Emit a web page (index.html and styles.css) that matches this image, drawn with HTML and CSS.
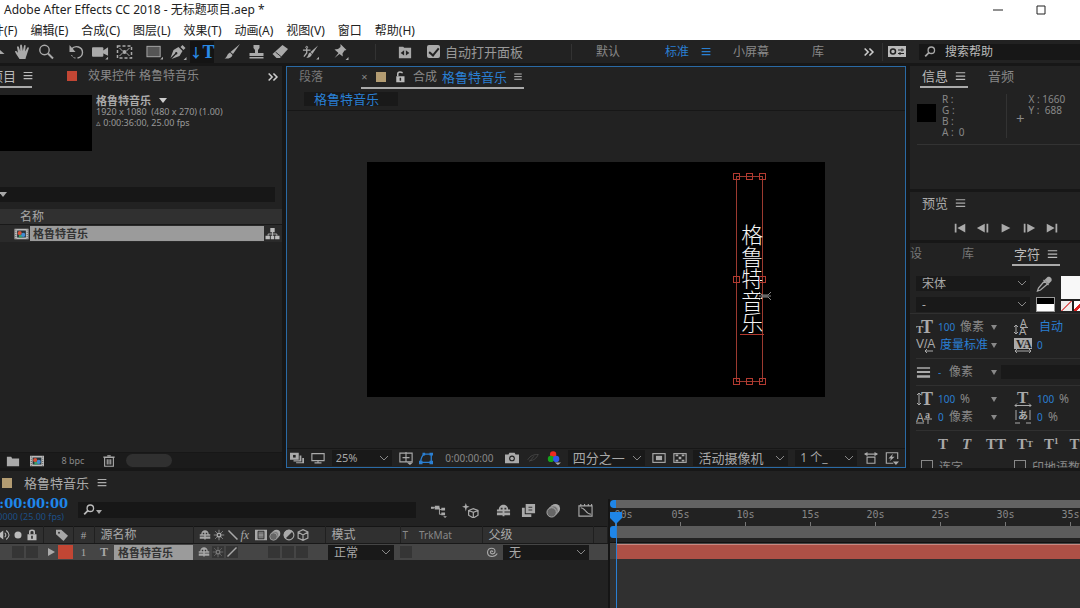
FILE: index.html
```html
<!DOCTYPE html>
<html lang="zh-CN">
<head>
<meta charset="utf-8">
<title>Adobe After Effects CC 2018 - 无标题项目.aep *</title>
<link rel="stylesheet" href="styles.css">
</head>
<body>
<svg class="sprite" aria-hidden="true">
  <symbol id="arrow" viewBox="0 0 16 16"><path d="M4 1l10 9H8l-4 4z"/></symbol>
  <symbol id="hand" viewBox="0 0 16 16"><path d="M5 15C3 12 1 9 .5 7.500c.6-1 1.700-.5 3 1.500L2.500 3c.4-1.200 1.600-.9 1.900.2L5.700 7 5.600 1.500c.3-1.200 1.600-1.200 1.900 0L8.300 7l1.200-5.300c.5-1.100 1.700-.7 1.600.4L10.700 7.500l2.100-3.800c.8-.9 1.900-.1 1.500.9L12.500 10c-.5 2-1.200 3-1.500 5z"/></symbol>
  <symbol id="zoom" viewBox="0 0 16 16"><g class="line"><circle cx="6" cy="6" r="4.700" stroke-width="1.400"/><path d="M9.500 9.500l5 5" stroke-width="2"/></g></symbol>
  <symbol id="search" viewBox="0 0 16 16"><g class="line"><circle cx="9.500" cy="6" r="3.700" stroke-width="1.500"/><path d="M7 8.500L2.500 13" stroke-width="2"/></g></symbol>
  <symbol id="rotate" viewBox="0 0 16 16"><path class="line" d="M3 5C7 .5 14 3 14 8.500 14 11 12 13.500 9 14" stroke-width="1.400"/><path class="line" d="M7 14C5 14 3.500 12.500 3 11" stroke-dasharray="2 1.500"/><path d="M1 1v7h6z"/></symbol>
  <symbol id="camera" viewBox="0 0 18 16"><rect y="3" width="12" height="10" rx="1"/><path d="M11 7l6-4v9l-6-3zM14 16h3v-3z"/></symbol>
  <symbol id="panbehind" viewBox="0 0 16 16"><g class="line"><rect x="1" y="2" width="14" height="12" stroke-width="1.500" stroke-dasharray="3 2"/><path d="M3 4l3 3M13 4l-3 3M3 12l3-3M13 12l-3-3"/></g><circle cx="8" cy="8" r="2"/></symbol>
  <symbol id="rect" viewBox="0 0 18 16"><rect x="1" y="2" width="14" height="11" fill="#555" stroke="#aaa"/><path d="M15 16h3v-3z"/></symbol>
  <symbol id="pen" viewBox="0 0 16 16"><path d="M0 14L3 6l5-3 4 4-3 5-8 3 4.500-4.500a1.200 1.200 0 1 0-1-1zM10 3l2-2 3 3-2 2zM13 16h3v-3z"/></symbol>
  <symbol id="brush" viewBox="0 0 16 16"><path d="M15.500 0L8.500 10 6 8zM5.500 8.500l2.500 2.500C7 14 4 15 0 14.500c3-1 2-4.500 5.500-6z"/></symbol>
  <symbol id="stamp" viewBox="0 0 16 16"><path d="M5 1h6v3L9.500 6v3H15v3H1V9h5.500V6L5 4zM1 13h14v1.500H1z"/></symbol>
  <symbol id="eraser" viewBox="0 0 16 16"><path d="M10 1l5.500 4-8 9H4L0 10z"/><path d="M3 8l6 5" stroke="#333"/></symbol>
  <symbol id="roto" viewBox="0 0 18 16"><path d="M17 1l-6 9-2-2zM8.500 8.500l2 2c-1 3-3 4-6 3.500 3-2 1.500-4.500 4-5.500zM15 16h3v-3z"/><g class="line"><circle cx="5" cy="3" r="1"/><path d="M5 4v5l-3 4M1 6h8" stroke-width="1.400"/></g></symbol>
  <symbol id="pin" viewBox="0 0 16 16"><path d="M8 0l6 6-2 .5-2 3 .3 3L7 10l-5 4 4-5-4-3.500 3.500-.5L8 3zM13 16h3v-3z"/></symbol>
  <symbol id="clapper" viewBox="0 0 16 16"><path d="M1 2h5l1 1h8v12H1z"/><path d="M7 6v6L3 9zm2 0v6l4-3z" fill="#222"/></symbol>
  <symbol id="menu" viewBox="0 0 16 16"><path d="M3 4h10M3 7.500h10M3 11h10" stroke="currentColor" stroke-width="1.300"/></symbol>
  <symbol id="more" viewBox="0 0 16 16"><path class="line" d="M3 4l4 4-4 4M8.500 4l4 4-4 4" stroke-width="1.800"/></symbol>
  <symbol id="sync" viewBox="0 0 18 11"><rect width="18" height="11"/><circle cx="5" cy="5.500" r="2.500" fill="none" stroke="#222" stroke-width="1.500"/><path d="M10 4h6M10 7.500h6M14 2.500v3M12 6v3" stroke="#222"/></symbol>
  <symbol id="lock" viewBox="0 0 16 16"><rect x="2" y="7" width="12" height="8"/><path class="line" d="M5 7V4c0-3 6-3 6 0v3" stroke-width="2"/><path d="M7 9h2v4H7z" fill="#222"/></symbol>
  <symbol id="unlock" viewBox="0 0 16 16"><rect x="3" y="7" width="11" height="8"/><path class="line" d="M5 7V4c0-4 6-3 6-1" stroke-width="2"/><path d="M7.500 9h2v4h-2z" fill="#222"/></symbol>
  <symbol id="compicon" viewBox="0 0 16 16"><rect x="0" y="2" width="16" height="12" fill="#bbb"/><path d="M1.500 3v11M14.500 3v11" stroke="#444" stroke-dasharray="1 1.500"/><rect x="3" y="4" width="10" height="8" fill="#26333b"/><circle cx="6" cy="7" r="2.300" fill="#d44e35"/><path d="M5 9h4v3H5z" fill="#3ba06a"/><circle cx="10" cy="9" r="2.300" fill="#408bd2"/></symbol>
  <symbol id="network" viewBox="0 0 16 16"><path d="M5.500 1h5v5h-5zM0 10h5v4H0zM6 10h4v4H6zM11 10h5v4h-5z"/><path class="line" d="M8 5v5M3 10V8h10v2"/></symbol>
  <symbol id="folder" viewBox="0 0 16 16"><path d="M1 3h5l1 2h8v9H1z"/></symbol>
  <symbol id="trash" viewBox="0 0 16 16"><g class="line" stroke-width="1.300"><path d="M3 4h10v10H3zM1.500 3.500h13M6 2h4M6 6v6M8 6v6M10 6v6"/></g></symbol>
  <symbol id="stack" viewBox="0 0 16 16"><rect x="0" y="2" width="10" height="8"/><path d="M11 5h2v7H4v-1.500h7zM14 8h2v6H7v-1.200h7z"/><rect x="3.500" y="4.500" width="3" height="3" fill="#222"/></symbol>
  <symbol id="monitor" viewBox="0 0 16 16"><path class="line" d="M1 3h14v8H1zM8 11v2M4 13.500h8" stroke-width="1.300"/></symbol>
  <symbol id="guides" viewBox="0 0 16 16"><path class="line" d="M1 2.500h14v10H1zM8 1v12M4 7.500h8" stroke-width="1.300"/><path d="M9 13h7l-3.500 3z"/></symbol>
  <symbol id="mask" viewBox="0 0 16 16"><path class="line" d="M2 13c0-5 1-7 4-9.500h8V13z" stroke-width="1.500"/><path d="M0 11h4v4H0zM4 2h3v3H4zM12 2h4v3h-4zM12 11h4v4h-4z"/></symbol>
  <symbol id="photo" viewBox="0 0 16 16"><path d="M0 4h4l1-2h6l1 2h4v10H0z"/><circle cx="8" cy="8.500" r="3.300" fill="#222"/><circle cx="8" cy="8.500" r="2"/></symbol>
  <symbol id="links" viewBox="0 0 16 16"><path class="line" d="M2 10c3-5 7-6 12-6-2 4-5 7-10 7M4 12l5-6"/></symbol>
  <symbol id="rgb" viewBox="0 0 16 16"><circle cx="7" cy="4" r="3.600" fill="#f02b1f"/><circle cx="4.500" cy="9" r="3.600" fill="#14a51b"/><circle cx="10.500" cy="9" r="3.600" fill="#315ae8"/><path d="M9 13h7l-3.500 3z"/></symbol>
  <symbol id="roi" viewBox="0 0 16 16"><rect class="line" x="1" y="3" width="14" height="10" stroke-width="1.300"/><rect x="4.500" y="5.500" width="7" height="5"/></symbol>
  <symbol id="checker" viewBox="0 0 16 16"><rect class="line" x="1" y="3" width="14" height="10" stroke-width="1.300"/><path d="M3 4h3v2H3zM10 4h3v2h-3zM6.500 6.500h3v3h-3zM3 10h3v2H3zM10 10h3v2h-3z"/></symbol>
  <symbol id="aspect" viewBox="0 0 16 16"><path class="line" d="M3.500 7h9v7h-9zM1 3.500h14" stroke-width="1.300"/><path d="M0 3.500L4 1v5zM16 3.500L12 1v5z"/></symbol>
  <symbol id="fast" viewBox="0 0 16 16"><path class="line" d="M14.500 9V2h-13v12h8" stroke-width="1.300"/><path d="M9 3L4 8.500h3L5 12l6-5.500H8zM9 12h7l-3.500 4z"/></symbol>
  <symbol id="first" viewBox="0 0 16 16"><path d="M2 3h2v10H2zM14 3v10L5 8z"/></symbol>
  <symbol id="prev" viewBox="0 0 16 16"><path d="M10 3v10L1 8zM12 3h2v10h-2z"/></symbol>
  <symbol id="play" viewBox="0 0 16 16"><path d="M3 3l10 5-10 5z"/></symbol>
  <symbol id="next" viewBox="0 0 16 16"><path d="M2 3h2v10H2zM6 3l9 5-9 5z"/></symbol>
  <symbol id="last" viewBox="0 0 16 16"><path d="M2 3l9 5-9 5zM12 3h2v10h-2z"/></symbol>
  <symbol id="dropper" viewBox="0 0 16 16"><path d="M11 1c2-1 5 1 4 4l-3 3-4-4z"/><path class="line" d="M8 5l3 3-7 6-3 1 1-3zM7 4l5 5" stroke-width="1.300"/></symbol>
  <symbol id="lines" viewBox="0 0 16 16"><path d="M1 3h14v1.500H1zM1 7h14v2H1zM1 11.500h14V14H1z"/></symbol>
  <symbol id="flow" viewBox="0 0 18 16"><path class="line" d="M1 5h7M10 5v7h4M10 7h5"/><path d="M5 3h5v4H5zM12 5h4v3h-4zM12 10h4v3h-4zM14 14h4l-2 2zM1 4h3v2H1z"/></symbol>
  <symbol id="draft" viewBox="0 0 18 16"><path d="M4 0l1 3 3 1-3 1-1 4-1-4-3-1 3-1z"/><path class="line" d="M7 8l5-2 5 2v5l-5 3-5-3zM7 8l5 2 5-2M12 10v6" stroke-width="1.300"/></symbol>
  <symbol id="shy" viewBox="0 0 16 16"><path d="M3 7c0-7 10-7 10 0h2v2H1V7zM1 10h6v3H1zM9 10h6v3H9zM7 6h2v8H7z"/><path d="M5 5h2v2H5zM9 5h2v2H9z" fill="#333"/></symbol>
  <symbol id="frames" viewBox="0 0 16 16"><path d="M5 1h10v10H5zM1 5h3v7h7v3H1z"/><path d="M8 4h4v1H8zM8 7h4v1H8z" fill="#333"/></symbol>
  <symbol id="blur" viewBox="0 0 16 16"><circle cx="10" cy="6" r="5"/><circle cx="8" cy="8" r="5" fill="#777" stroke="currentColor"/><circle cx="6" cy="10" r="5" fill="#666" stroke="currentColor"/></symbol>
  <symbol id="graph" viewBox="0 0 16 16"><path class="line" d="M1 3h14v11H1zM3 5c5 0 5 7 11 7M3 1v3M7 1v2M11 1v2M14.500 1v2" stroke-width="1.200"/></symbol>
  <symbol id="sound" viewBox="0 0 16 16"><path d="M0 5h3l4-3v12l-4-3H0z"/><path class="line" d="M9 5c2 2 2 4 0 6M11 2c5 4 5 8 0 12" stroke-width="1.400"/></symbol>
  <symbol id="dot" viewBox="0 0 16 16"><circle cx="8" cy="8" r="4.700"/></symbol>
  <symbol id="tag" viewBox="0 0 16 16"><path d="M0 1h7l9 8-6 7-10-9z"/><circle cx="4" cy="5" r="1.300" fill="#333"/></symbol>
  <symbol id="sun" viewBox="0 0 16 16"><circle class="line" cx="8" cy="8" r="2.500" stroke-width="2"/><path class="line" d="M8 1v3M8 12v3M1 8h3M12 8h3M3 3l2 2M13 3l-2 2M3 13l2-2M13 13l-2-2"/></symbol>
  <symbol id="slash" viewBox="0 0 16 16"><path class="line" d="M2 14L14 2" stroke-width="2"/></symbol>
  <symbol id="backslash" viewBox="0 0 16 16"><path class="line" d="M2 2l12 12" stroke-width="2"/></symbol>
  <symbol id="film" viewBox="0 0 16 16"><path d="M0 1h16v14H0z"/><path d="M4 3h8v10H4z" fill="#777" stroke="#222"/><path d="M5 7.500h6v1H5z"/></symbol>
  <symbol id="adjust" viewBox="0 0 16 16"><circle class="line" cx="8" cy="8" r="6.500" stroke-width="1.500"/><path d="M13 3A7 7 0 0 0 3 13z"/></symbol>
  <symbol id="cube" viewBox="0 0 16 16"><path class="line" d="M1.500 4L8 1l6.500 3v8L8 15l-6.500-3zM1.500 4L8 8l6.500-4M8 8v7" stroke-width="1.600"/></symbol>
  <symbol id="spiral" viewBox="0 0 16 16"><path class="line" d="M9 8c0-2-3-2-3 0 0 4 6 3 6-1 0-5-9-6-10 1 0 7 9 8 13 2" stroke-width="1.500"/></symbol>
  <symbol id="size" viewBox="0 0 20 16"><text x="0" y="14" font-size="11">T</text><text x="5" y="14" font-size="18">T</text></symbol>
  <symbol id="kern" viewBox="0 0 20 16"><text x="0" y="11" font-size="12" class="thin">V/A</text><path class="line" d="M9 14h8M11 12l-2 2 2 2"/></symbol>
  <symbol id="leading" viewBox="0 0 20 16"><text x="7" y="8" font-size="10" class="thin">A</text><text x="6" y="16" font-size="11" class="thin">A</text><path class="line" d="M3 6v9M1 8l2-2 2 2M1 13l2 2 2-2M7 8.500h8"/></symbol>
  <symbol id="track" viewBox="0 0 20 16"><rect x="1" y="1" width="18" height="11"/><text x="3" y="11" font-size="12" fill="#222">VA</text><path class="line" d="M2 14h16M4 12l-2 2 2 2M16 12l2 2-2 2"/></symbol>
  <symbol id="vscale" viewBox="0 0 20 16"><text x="5" y="14" font-size="18">T</text><path class="line" d="M3 2v12M1 4l2-2 2 2M1 12l2 2 2-2"/></symbol>
  <symbol id="hscale" viewBox="0 0 20 16"><text x="4" y="12" font-size="17">T</text><path class="line" d="M2 14.500h16M4 12.500l-2 2 2 2M16 12.500l2 2-2 2"/></symbol>
  <symbol id="baseline" viewBox="0 0 20 16"><text x="0" y="13" font-size="12" class="thin">A</text><text x="9" y="9" font-size="10">a</text><path class="line" d="M0 14h8M8 10h8M12 10v5"/></symbol>
  <symbol id="tsume" viewBox="0 0 20 16"><text x="5" y="10" font-size="10">あ</text><path class="line" d="M3 1v10M17 1v10M2 14h5M18 14h-5"/></symbol>
</svg>

<header class="titlebar">
  <h1>Adobe After Effects CC 2018 - 无标题项目.aep *</h1>
  <div class="winbtns">
    <button aria-label="最小化"><svg viewBox="0 0 10 10"><path d="M0 5h10"/></svg></button>
    <button aria-label="最大化"><svg viewBox="0 0 10 10"><path d="M1 1h8v8H1z"/></svg></button>
    <button aria-label="关闭"><svg viewBox="0 0 10 10"><path d="M1 1l8 8M9 1L1 9"/></svg></button>
  </div>
</header>
<nav class="menubar">
  <button>文件(F)</button><button>编辑(E)</button><button>合成(C)</button><button>图层(L)</button><button>效果(T)</button><button>动画(A)</button><button>视图(V)</button><button>窗口</button><button>帮助(H)</button>
</nav>

<div class="toolbar">
  <div class="tools">
    <div class="group"><button aria-label="选取"><svg><use href="#arrow"/></svg></button><button aria-label="手形"><svg><use href="#hand"/></svg></button><button aria-label="缩放"><svg><use href="#zoom"/></svg></button></div>
    <div class="group"><button aria-label="旋转"><svg><use href="#rotate"/></svg></button><button aria-label="摄像机"><svg><use href="#camera"/></svg></button><button aria-label="锚点"><svg><use href="#panbehind"/></svg></button></div>
    <div class="group"><button aria-label="矩形"><svg><use href="#rect"/></svg></button><button aria-label="钢笔"><svg><use href="#pen"/></svg></button><button class="on" aria-label="直排文字">↓<b>T</b></button></div>
    <div class="group"><button aria-label="画笔"><svg><use href="#brush"/></svg></button><button aria-label="仿制图章"><svg><use href="#stamp"/></svg></button><button aria-label="橡皮擦"><svg><use href="#eraser"/></svg></button></div>
    <div class="group"><button aria-label="Roto 笔刷"><svg><use href="#roto"/></svg></button></div>
    <div class="group"><button aria-label="操控点"><svg><use href="#pin"/></svg></button></div>
  </div>
  <div class="autopanel">
    <svg class="ic"><use href="#clapper"/></svg>
    <label class="check"><input type="checkbox" checked>自动打开面板</label>
  </div>
  <div class="spaces">
    <button>默认</button>
    <button class="on">标准<svg class="ic"><use href="#menu"/></svg></button>
    <button class="small">小屏幕</button>
    <button class="library">库</button>
    <button class="bright" aria-label="更多"><svg class="ic"><use href="#more"/></svg></button>
  </div>
  <button class="syncbtn" aria-label="同步设置"><svg><use href="#sync"/></svg></button>
  <label class="helpsearch"><svg class="ic"><use href="#search"/></svg><input type="text" placeholder="搜索帮助" aria-label="搜索帮助"></label>
</div>

<main class="workspace">
  <section class="panel project">
    <div class="tabs">
      <button class="tab on cut">项目<svg class="ic"><use href="#menu"/></svg></button>
      <button class="tab fx"><i class="swatch red"></i>效果控件 格鲁特音乐</button>
      <button class="overflow" aria-label="更多"><svg class="ic"><use href="#more"/></svg></button>
    </div>
    <div class="preview">
      <div class="thumb"></div>
      <div class="meta">
        <strong>格鲁特音乐 <i class="tri"></i></strong>
        <span>1920 x 1080&nbsp; (480 x 270) (1.00)</span>
        <span>▵ 0:00:36:00, 25.00 fps</span>
      </div>
    </div>
    <label class="filter"><i class="tri"></i><input type="text" aria-label="搜索项目"></label>
    <div class="colhead">名称</div>
    <div class="item"><svg class="ic"><use href="#compicon"/></svg><span>格鲁特音乐</span><svg class="ic"><use href="#network"/></svg></div>
    <div class="fill"></div>
    <div class="pfoot">
      <button aria-label="新建文件夹"><svg class="ic"><use href="#folder"/></svg></button>
      <button aria-label="新建合成"><svg class="ic"><use href="#compicon"/></svg></button>
      <button class="bpc">8 bpc</button>
      <button aria-label="删除"><svg class="ic"><use href="#trash"/></svg></button>
      <div class="hscroll"></div>
    </div>
  </section>

  <section class="viewer">
    <div class="tabs">
      <button class="tab para">段落</button>
      <button class="tab on comp"><span class="x">×</span><i class="swatch tan"></i><svg class="ic"><use href="#unlock"/></svg><span class="dim">合成</span><span class="blue">格鲁特音乐</span><svg class="ic"><use href="#menu"/></svg></button>
    </div>
    <div class="crumbs"><button>格鲁特音乐</button></div>
    <div class="stage">
      <div class="canvas">
        <div class="textbox">
          <i class="h tl"></i><i class="h tc"></i><i class="h tr"></i><i class="h ml"></i><i class="h mr"></i><i class="h bl"></i><i class="h bc"></i><i class="h br"></i>
          <span>格鲁特音乐</span>
          <svg class="cursor" viewBox="0 0 14 10"><path d="M1 1l3 3h6l3-3M1 9l3-3h6l3 3M1 5h12"/></svg>
        </div>
      </div>
    </div>
    <div class="vfoot">
      <button aria-label="始终预览"><svg class="ic"><use href="#stack"/></svg></button>
      <button aria-label="主查看器"><svg class="ic"><use href="#monitor"/></svg></button>
      <select class="zoomsel" aria-label="放大率"><option>25%</option></select>
      <button aria-label="参考线"><svg class="ic"><use href="#guides"/></svg></button>
      <button class="on" aria-label="蒙版"><svg class="ic"><use href="#mask"/></svg></button>
      <button class="vtime">0:00:00:00</button>
      <button aria-label="快照"><svg class="ic"><use href="#photo"/></svg></button>
      <button class="off" aria-label="显示快照"><svg class="ic"><use href="#links"/></svg></button>
      <button aria-label="通道"><svg class="ic"><use href="#rgb"/></svg></button>
      <select class="ressel" aria-label="分辨率"><option>四分之一</option></select>
      <button aria-label="目标区域"><svg class="ic"><use href="#roi"/></svg></button>
      <button aria-label="透明网格"><svg class="ic"><use href="#checker"/></svg></button>
      <select class="camsel" aria-label="3D 视图"><option>活动摄像机</option></select>
      <select class="viewsel" aria-label="视图布局"><option>1 个_</option></select>
      <button aria-label="像素长宽比"><svg class="ic"><use href="#aspect"/></svg></button>
      <button aria-label="快速预览"><svg class="ic"><use href="#fast"/></svg></button>
    </div>
  </section>

  <aside class="side">
    <section class="panel info">
      <div class="tabs">
        <button class="tab on">信息<svg class="ic"><use href="#menu"/></svg></button>
        <button class="tab audio">音频</button>
      </div>
      <div class="readout">
        <div class="colour"></div>
        <div class="rgba"><span>R :</span><span>G :</span><span>B :</span><span>A :&nbsp; 0</span></div>
        <div class="plus">+</div>
        <div class="xy"><span>X : 1660</span><span>Y :&nbsp; 688</span></div>
      </div>
    </section>
    <section class="panel play">
      <div class="tabs"><button class="tab">预览<svg class="ic"><use href="#menu"/></svg></button></div>
      <div class="transport">
        <button aria-label="第一帧"><svg class="ic"><use href="#first"/></svg></button>
        <button aria-label="上一帧"><svg class="ic"><use href="#prev"/></svg></button>
        <button aria-label="播放"><svg class="ic"><use href="#play"/></svg></button>
        <button aria-label="下一帧"><svg class="ic"><use href="#next"/></svg></button>
        <button aria-label="最后一帧"><svg class="ic"><use href="#last"/></svg></button>
      </div>
    </section>
    <section class="panel chars">
      <div class="tabs">
        <button class="tab preset">设</button><button class="tab lib">库</button>
        <button class="tab on">字符<svg class="ic"><use href="#menu"/></svg></button>
      </div>
      <div class="fontrow">
        <div class="fonts">
          <select aria-label="字体"><option>宋体</option></select>
          <select aria-label="字体样式"><option>-</option></select>
        </div>
        <div class="pick"><svg class="ic"><use href="#dropper"/></svg><i class="bw"></i></div>
        <div class="paint"><i class="white"></i><div><i class="none"></i><i class="none strong"></i></div></div>
      </div>
      <div class="props">
        <svg><use href="#size"/></svg><label><input value="100" aria-label="字体大小">像素</label><i class="tri"></i><svg><use href="#leading"/></svg><label class="cjk">自动</label>
        <svg><use href="#kern"/></svg><label class="cjk">度量标准</label><i class="tri"></i><svg><use href="#track"/></svg><label><input value="0" aria-label="字符间距"></label>
      </div>
      <div class="props stroke">
        <svg><use href="#lines"/></svg><label><input class="one" value="-" aria-label="描边宽度">像素</label><i class="tri"></i><span class="slot"></span>
      </div>
      <div class="props">
        <svg><use href="#vscale"/></svg><label><input value="100" aria-label="垂直缩放">%</label><i class="tri"></i><svg><use href="#hscale"/></svg><label><input value="100" aria-label="水平缩放">%</label>
        <svg><use href="#baseline"/></svg><label><input class="one" value="0" aria-label="基线偏移">像素</label><i class="tri"></i><svg><use href="#tsume"/></svg><label><input class="one" value="0" aria-label="比例间距">%</label>
      </div>
      <div class="styles">
        <button class="faux">T</button><button><em>T</em></button><button>TT</button><button>T<small>T</small></button><button>T<sup>1</sup></button><button>T<sub>1</sub></button>
      </div>
      <div class="opts"><label><input type="checkbox">连字</label><label><input type="checkbox">印地语数字</label></div>
    </section>
  </aside>
</main>

<section class="timeline">
  <div class="tabs"><button class="tab"><i class="swatch tan"></i>格鲁特音乐<svg class="ic"><use href="#menu"/></svg></button></div>
  <div class="tbody">
    <div class="layers">
      <div class="tctl">
        <div class="clock"><b>0:00:00:00</b><span>00000 (25.00 fps)</span></div>
        <label class="tsearch"><svg class="ic"><use href="#search"/></svg><i class="tri"></i><input type="text" aria-label="搜索图层"></label>
        <div class="tbtns">
          <button aria-label="合成微型流程图"><svg><use href="#flow"/></svg></button>
          <button aria-label="草图 3D"><svg><use href="#draft"/></svg></button>
          <button aria-label="隐藏图层"><svg><use href="#shy"/></svg></button>
          <button aria-label="帧混合"><svg><use href="#frames"/></svg></button>
          <button aria-label="运动模糊"><svg><use href="#blur"/></svg></button>
          <button aria-label="图表编辑器"><svg><use href="#graph"/></svg></button>
        </div>
      </div>
      <table>
        <colgroup><col class="c1"><col class="c2"><col class="c3"><col class="c4"><col class="c5"><col class="c6"><col class="c7"><col class="c8"><col></colgroup>
        <thead><tr>
          <th><div class="cells av"><svg><use href="#sound"/></svg><svg><use href="#dot"/></svg><svg><use href="#lock"/></svg></div></th>
          <th><div class="cells lab"><svg><use href="#tag"/></svg></div></th>
          <th class="mid">#</th>
          <th class="srcname">源名称</th>
          <th><div class="cells sw"><svg><use href="#shy"/></svg><svg><use href="#sun"/></svg><svg><use href="#backslash"/></svg><em>fx</em><svg><use href="#film"/></svg><svg><use href="#blur"/></svg><svg><use href="#adjust"/></svg><svg><use href="#cube"/></svg></div></th>
          <th class="mode">模式</th>
          <th class="trk"><span>T</span><span>TrkMat</span></th>
          <th class="parent">父级</th>
          <th></th>
        </tr></thead>
        <tbody><tr>
          <td><div class="cells av"><i></i><i class="box"></i><i class="box"></i></div></td>
          <td><div class="cells lab"><i class="twirl"></i><i class="redbox"></i></div></td>
          <td class="mid">1</td>
          <td><div class="lname"><b>T</b><span>格鲁特音乐</span></div></td>
          <td><div class="cells sw"><svg><use href="#shy"/></svg><svg class="faint box"><use href="#sun"/></svg><svg class="box"><use href="#slash"/></svg><i></i><i></i><i class="box"></i><i class="box"></i><i class="box"></i></div></td>
          <td><select class="modesel" aria-label="模式"><option>正常</option></select></td>
          <td><i class="box"></i></td>
          <td><div class="par"><svg><use href="#spiral"/></svg><select aria-label="父级"><option>无</option></select></div></td>
          <td></td>
        </tr></tbody>
      </table>
    </div>
    <div class="track">
      <div class="nav"></div>
      <div class="ruler"><span>00s</span><span>05s</span><span>10s</span><span>15s</span><span>20s</span><span>25s</span><span>30s</span><span>35s</span></div>
      <div class="work"></div>
      <div class="lane"><div class="clip"></div></div>
      <div class="rest"></div>
      <svg class="playhead" viewBox="0 0 12 12"><path d="M0 0h12v6l-6 6-6-6z"/></svg>
      <i class="needle"></i>
    </div>
  </div>
</section>
</body>
</html>
```
FILE: styles.css
```css
* { box-sizing: border-box; }
body {
  margin: 0;
  min-height: 100vh;
  display: flex;
  flex-direction: column;
  overflow: hidden;
  background: #171717;
  color: #a8a8a8;
  font: 13px/16px "Noto Sans", "Noto Sans CJK SC", sans-serif;
}
button, input, select {
  margin: 0; padding: 0; border: 0; border-radius: 0;
  background: none; color: inherit; font: inherit; outline: 0; appearance: none;
}
button { display: flex; align-items: center; white-space: nowrap; flex: none; }
input { min-width: 0; }
svg { fill: currentColor; flex: none; }
.sprite { display: none; }
.sprite text { font-family: "Liberation Serif", "Noto Sans CJK SC", serif; font-weight: bold; }
.sprite .thin { font-family: "Liberation Sans", sans-serif; font-weight: normal; }
.line { fill: none; stroke: currentColor; }
.ic { width: 14px; height: 14px; }
.blue { color: #2a7fd2; }
.tri { width: 0; height: 0; border: 4px solid transparent; border-top: 5px solid #a8a8a8; border-bottom: 0; flex: none; }
.swatch { width: 10px; height: 10px; flex: none; }
.red { background: #c24634; }
.tan { background: #b39c72; }
select {
  background: #191919 url("data:image/svg+xml,%3Csvg xmlns='http://www.w3.org/2000/svg' width='8' height='5'%3E%3Cpath d='M0 0l4 4 4-4' fill='none' stroke='%23888'/%3E%3C/svg%3E") no-repeat right 4px center;
}

.titlebar, .menubar { background: #fff; color: #222; display: flex; font-size: 12px; }
.titlebar { height: 20px; align-items: center; overflow: hidden; flex: none; }
.titlebar h1 { margin: 0 auto 0 4px; font-size: 12px; font-weight: 400; }
.winbtns { display: flex; margin-right: -25px; }
.winbtns button { width: 43px; height: 20px; justify-content: center; }
.winbtns svg { width: 10px; height: 10px; fill: none; stroke: #222; }
.menubar { height: 20px; padding-top: 2px; gap: 13px; margin-left: -20px; overflow: hidden; flex: none; align-items: center; }

.toolbar { height: 23px; background: #222; display: flex; align-items: center; flex: none; overflow: hidden; margin-bottom: 3px; }
.tools { display: flex; margin-left: -14px; gap: 6px; flex: none; }
.group { display: flex; }
.tools button { width: 24px; height: 22px; justify-content: center; color: #aaa; }
.tools svg { width: 17px; height: 16px; }
.tools .on { background: #141414; color: #2a8ae6; font-size: 13px; font-weight: 700; }
.tools .on b { font: bold 18px/18px "Liberation Serif", serif; }
.autopanel { display: flex; align-items: center; gap: 15px; width: 196px; margin-left: 23px; padding-left: 22px; border-left: 1px solid #333; flex: none; }
.check { display: flex; align-items: center; gap: 5px; white-space: nowrap; color: #999; }
.check input { width: 13px; height: 13px; background: #aaa; border-radius: 2px; position: relative; flex: none; }
.check input::after { content: ""; position: absolute; left: 4px; top: 1px; width: 4px; height: 8px; border: solid #222; border-width: 0 2px 2px 0; transform: rotate(40deg); }
.spaces { flex: 1; display: flex; align-items: center; padding: 0 6px 0 24px; border-left: 1px solid #333; color: #888; font-size: 12px; }
.spaces .on { color: #2a7fd2; gap: 10px; margin-left: 45px; }
.spaces .small { margin-left: 20px; }
.spaces .library { margin-left: 43px; }
.spaces .bright { color: #ccc; margin-left: auto; }
.syncbtn { border-left: 1px solid #333; padding: 0 13px 0 5px; color: #bbb; height: 18px; }
.syncbtn svg { width: 18px; height: 11px; }
.helpsearch { width: 161px; height: 16px; background: #171717; display: flex; align-items: center; gap: 8px; padding-left: 4px; flex: none; }
.helpsearch input { width: 110px; font-size: 12px; }
.helpsearch input::placeholder { color: #bbb; opacity: 1; }

.workspace { display: flex; gap: 4px; height: 402px; flex: none; }
.panel { background: #222; }
.tabs { display: flex; height: 22px; align-items: center; flex: none; }
.tab { height: 22px; border-bottom: 2px solid transparent; color: #888; }
.tab.on { border-color: #aaa; color: #bbb; }

.project { width: 282px; display: flex; flex-direction: column; overflow: hidden; }
.project .cut { margin-left: -10px; gap: 5px; width: 42px; }
.fx { gap: 11px; margin-left: 35px; font-size: 12px; }
.overflow { margin-left: auto; padding-right: 2px; color: #ccc; }
.preview { display: flex; gap: 4px; margin-top: 7px; }
.thumb { width: 92px; height: 56px; background: #000; }
.meta { display: flex; flex-direction: column; font-size: 9px; line-height: 11px; white-space: nowrap; color: #999; }
.meta strong { display: flex; align-items: center; gap: 8px; font-size: 11px; color: #aaa; }
.meta .tri { border-top-color: #ccc; }
.filter { display: flex; align-items: center; height: 15px; margin: 36px 7px 7px 0; background: #171717; }
.filter .tri { margin-left: -1px; }
.filter input { flex: 1; }
.colhead { height: 16px; line-height: 15px; padding-left: 20px; background: #303030; border-bottom: 1px solid #191919; font-size: 12px; }
.item { display: flex; align-items: center; gap: 1px; height: 17px; padding: 0 2px 0 14px; background: #2a2a2a; color: #bbb; }
.item span { flex: 1; height: 15px; line-height: 15px; background: #9b9b9b; color: #333; font-size: 11px; font-weight: 700; padding-left: 3px; }
.item .ic { width: 15px; }
.fill { flex: 1; }
.pfoot { display: flex; align-items: center; height: 16px; gap: 10px; padding-left: 6px; background: #1b1b1b; color: #aaa; border-top: 1px solid #171717; }
.pfoot .bpc { width: 38px; justify-content: center; font-size: 9px; color: #888; }
.hscroll { width: 46px; height: 13px; border-radius: 7px; background: #303030; }

.viewer { flex: 1; min-width: 0; border: 1px solid #2a6aa5; background: #222; display: flex; flex-direction: column; }
.para { margin-left: 12px; color: #777; font-size: 12px; }
.comp { margin-left: 38px; gap: 5px; }
.comp .x { width: 7px; font-size: 11px; margin-right: 3px; color: #888; }
.comp .swatch { margin-right: 3px; }
.comp .dim { margin-left: 2px; color: #888; font-size: 12px; }
.comp .ic { width: 12px; }
.crumbs { height: 22px; padding: 3px 0 0 17px; border-bottom: 1px solid #171717; }
.crumbs button { height: 14px; width: 94px; padding-left: 10px; background: #191919; color: #2a7fd2; }
.stage { flex: 1; display: flex; align-items: center; justify-content: center; background: #222; }
.canvas { position: relative; width: 74%; aspect-ratio: 457 / 234; background: #000; }
.textbox { position: absolute; right: 62px; top: 14px; width: 27px; height: 206px; border: 1px solid #9c3a30; display: flex; align-items: center; justify-content: center; }
.textbox span { writing-mode: vertical-rl; font: 300 22px/24px "Noto Sans CJK SC", sans-serif; color: #f4f4f4; border-bottom: 1px solid #b33a30; margin-left: 6px; flex: none; }
.h { position: absolute; width: 7px; height: 7px; border: 1px solid #b33a30; }
.tl, .ml, .bl { left: -4px; }
.tr, .mr, .br { right: -4px; }
.tc, .bc { left: 9px; }
.tl, .tc, .tr { top: -4px; }
.bl, .bc, .br { bottom: -4px; }
.ml, .mr { top: 99px; }
.cursor { position: absolute; left: 21px; top: 114px; width: 14px; height: 10px; fill: none; stroke: #888; }
.vfoot { display: flex; align-items: center; height: 19px; padding: 0 6px 0 3px; border-top: 1px solid #171717; color: #aaa; justify-content: space-between; }
.vfoot select { height: 16px; padding: 0 14px 0 5px; flex: none; color: #a8a8a8; }
.vfoot .zoomsel { width: 60px; font-size: 11px; padding-left: 4px; }
.vfoot .ressel { width: 77px; }
.vfoot .camsel { width: 95px; }
.vfoot .viewsel { width: 62px; font-size: 12px; }
.vfoot .on { color: #2a7fd2; }
.vfoot .off { color: #484848; }
.vtime { font-size: 10px; color: #888; margin: 0 5px; }

.side { width: 170px; display: flex; flex-direction: column; gap: 3px; overflow: hidden; }
.side .panel { flex: none; }
.info { height: 123px; }
.info .tabs { padding-left: 10px; }
.side .on { gap: 5px; padding-left: 2px; }
.side .tab .ic { width: 15px; height: 15px; }
.audio { margin-left: 20px; }
.readout { display: flex; margin: 6px 0 0 7px; padding-bottom: 6px; border-bottom: 1px solid #333; font-size: 10px; line-height: 11px; color: #888; }
.colour { width: 19px; height: 18px; margin-top: 10px; background: #000; }
.rgba, .xy { display: flex; flex-direction: column; white-space: nowrap; }
.rgba { margin-left: 6px; width: 65px; border-right: 1px solid #333; }
.plus { font-size: 15px; margin: 19px 4px 0 9px; }
.side .play { height: 48px; }
.play .tab { padding: 2px 0 0 12px; gap: 5px; color: #aaa; }
.transport { display: flex; gap: 9px; padding: 7px 0 0 43px; color: #aaa; }
.side .chars { flex: 1; overflow: hidden; }
.chars .tabs { margin-top: 1px; }
.preset { width: 52px; }
.lib { width: 50px; }
.preset, .lib { color: #777; font-size: 12px; }
.fontrow { display: flex; padding: 10px 0 0 6px; height: 48px; gap: 6px; margin-bottom: 4px; border-bottom: 1px solid #303030; }
.fonts { display: flex; flex-direction: column; gap: 6px; }
.fonts select { width: 114px; height: 15px; padding-left: 6px; font-size: 12px; }
.pick { display: flex; flex-direction: column; gap: 5px; flex: none; }
.pick .ic { width: 17px; height: 16px; }
.bw { width: 19px; height: 15px; border: 1px solid #999; background: linear-gradient(#000 50%, #fff 50%); }
.paint { width: 40px; flex: none; }
.paint div { display: flex; gap: 2px; }
.white { display: block; width: 34px; height: 23px; background: #f8f8f8; margin-bottom: 2px; }
.none { width: 11px; height: 10px; background: linear-gradient(135deg, #eee 45%, #d66 45%, #d66 55%, #eee 55%); }
.strong { background: linear-gradient(135deg, #fff 42%, #d22 42%, #d22 58%, #fff 58%); }
.props { display: grid; grid-template-columns: 22px 51px 24px 24px 1fr; grid-auto-rows: 18px; align-items: center; margin-left: 6px; padding-bottom: 4px; margin-bottom: 4px; border-bottom: 1px solid #303030; color: #aaa; }
.props svg { width: 20px; height: 16px; }
.props .tri { border-width: 5px 3px 0; margin-left: 2px; border-top-color: #888; }
.props label { display: flex; align-items: center; gap: 3px; font-size: 12px; color: #888; white-space: nowrap; }
.props label.cjk { color: #2a7fd2; margin-left: 2px; }
.props input { width: 19px; height: 14px; font-size: 10px; color: #2a7fd2; }
.props .one { width: 8px; }
.stroke svg { width: 15px; }
.slot { grid-column: 4 / 6; height: 14px; background: #191919; margin-left: -12px; }
.styles { display: flex; gap: 11px; padding: 2px 0 0 28px; height: 17px; font: bold 15px/15px "Liberation Serif", serif; }
.styles .faux, .styles .faux + button { width: 13px; }
.styles small, .styles sup, .styles sub { font-size: 9px; line-height: 9px; }
.styles sup { align-self: flex-start; }
.styles sub { align-self: flex-end; }
.opts { display: flex; padding: 8px 0 0 11px; color: #888; font-size: 12px; }
.opts label { display: flex; width: 93px; gap: 6px; flex: none; align-items: flex-start; white-space: nowrap; }
.opts input { width: 12px; height: 12px; border: 1px solid #888; }

.timeline { flex: 1; display: flex; flex-direction: column; background: #222; margin-top: 3px; }
.timeline > .tabs { padding: 2px 0 0 2px; height: 24px; }
.timeline .tab { gap: 6px; color: #aaa; }
.timeline .tab .swatch { margin-right: 6px; }
.tbody { flex: 1; display: flex; padding-top: 4px; }
.layers { width: 610px; flex: none; border-right: 2px solid #151515; }
.tctl { display: flex; align-items: center; height: 27px; padding-bottom: 5px; }
.clock { width: 68px; display: flex; flex-direction: column; align-items: flex-end; white-space: nowrap; flex: none; }
.clock b { font: bold 13px/14px "DejaVu Serif", serif; color: #1f86e8; }
.clock span { font-size: 9px; line-height: 12px; color: #1c4f86; padding-right: 4px; }
.tsearch { width: 338px; height: 16px; margin: 0 14px 0 10px; background: #171717; display: flex; align-items: center; padding-left: 4px; color: #bbb; flex: none; }
.tsearch .tri { border-width: 4px 3px 0; align-self: flex-end; margin-bottom: 4px; }
.tsearch input { flex: 1; }
.tbtns { flex: 1; display: grid; grid-template-columns: 32px 33px 25px 25px 32px 32px; color: #aaa; }
.tbtns svg { width: 17px; height: 15px; }
table { width: 100%; table-layout: fixed; border-collapse: collapse; }
th, td { padding: 0; height: 16px; line-height: 16px; font-weight: 400; text-align: left; white-space: nowrap; }
thead { background: #303030; }
thead th { border-right: 1px solid #202020; }
th { border-top: 1px solid #151515; border-bottom: 1px solid #191919; }
tbody { background: #454545; }
.c1 { width: 43px; } .c2 { width: 30px; } .c3 { width: 21px; } .c4 { width: 99px; }
.c5 { width: 132px; } .c6 { width: 75px; } .c7 { width: 82px; } .c8 { width: 111px; }
.cells { display: flex; align-items: center; height: 15px; }
.cells svg { width: 12px; height: 12px; }
.cells em { width: 12px; font: italic 12px/14px "Liberation Serif", serif; }
.cells i { width: 12px; height: 12px; }
.av { gap: 2px; margin-left: -2px; }
.av svg { color: #bbb; }
.lab { padding-left: 12px; }
tbody .lab { padding-left: 5px; gap: 3px; }
.cells .twirl { width: 0; height: 0; border: 4px solid transparent; border-left: 7px solid #aaa; border-right: 0; }
.cells .redbox { width: 15px; height: 14px; background: #c24634; }
.sw { gap: 2px; padding-left: 5px; }
.box { display: block; width: 12px; height: 12px; background: #353535; }
.faint { color: #777; }
.mid { font: 11px/16px "Liberation Serif", serif; text-align: center; }
.srcname, .mode, .parent { padding-left: 6px; font-size: 12px; }
.trk { font-size: 10px; color: #888; padding-left: 2px; }
.trk span + span { margin-left: 11px; }
.lname { display: flex; }
.lname b { width: 20px; text-align: center; font: bold 12px/15px "Liberation Serif", serif; }
.lname span { flex: 1; height: 15px; line-height: 15px; background: #9b9b9b; color: #333; font-size: 11px; font-weight: 700; padding-left: 4px; }
td select { display: block; height: 15px; font-size: 12px; padding-left: 6px; }
.modesel { width: 66px; margin-left: 3px; }
.par { display: flex; align-items: center; gap: 5px; padding-left: 4px; }
.par svg { width: 12px; height: 12px; }
.par select { width: 86px; }
.track { flex: 1; min-width: 0; overflow: hidden; position: relative; display: flex; flex-direction: column; background: #222; }
.nav { height: 8px; margin-top: 1px; background: #636363; border-left: 6px solid #1f86e8; border-radius: 5px 0 0 5px; }
.ruler { display: flex; height: 18px; padding-top: 1px; margin-left: -27px; overflow: hidden; }
.ruler span { width: 65px; flex: none; text-align: center; font: 10px/12px "DejaVu Sans Mono", monospace; color: #888; }
.ruler span::after { content: ""; display: block; width: 1px; height: 4px; margin: 1px auto 0; background: #777; }
.ruler span:first-child { text-indent: 16px; }
.work { height: 12px; background: #5c5c5c; border-left: 6px solid #1f86e8; border-radius: 3px 0 0 3px; }
.lane { margin-top: 4px; border-top: 1px solid #111; padding: 1px 0 0 6px; background: #444; }
.clip { height: 15px; background: #ad5046; border-top: 1px solid #c98880; }
.rest { flex: 1; background: #303030; }
.playhead { position: absolute; left: 0; top: 13px; width: 12px; height: 12px; fill: #1f86e8; }
.needle { position: absolute; left: 6px; top: 24px; bottom: 0; width: 1px; background: #2a7fd2; }
```
